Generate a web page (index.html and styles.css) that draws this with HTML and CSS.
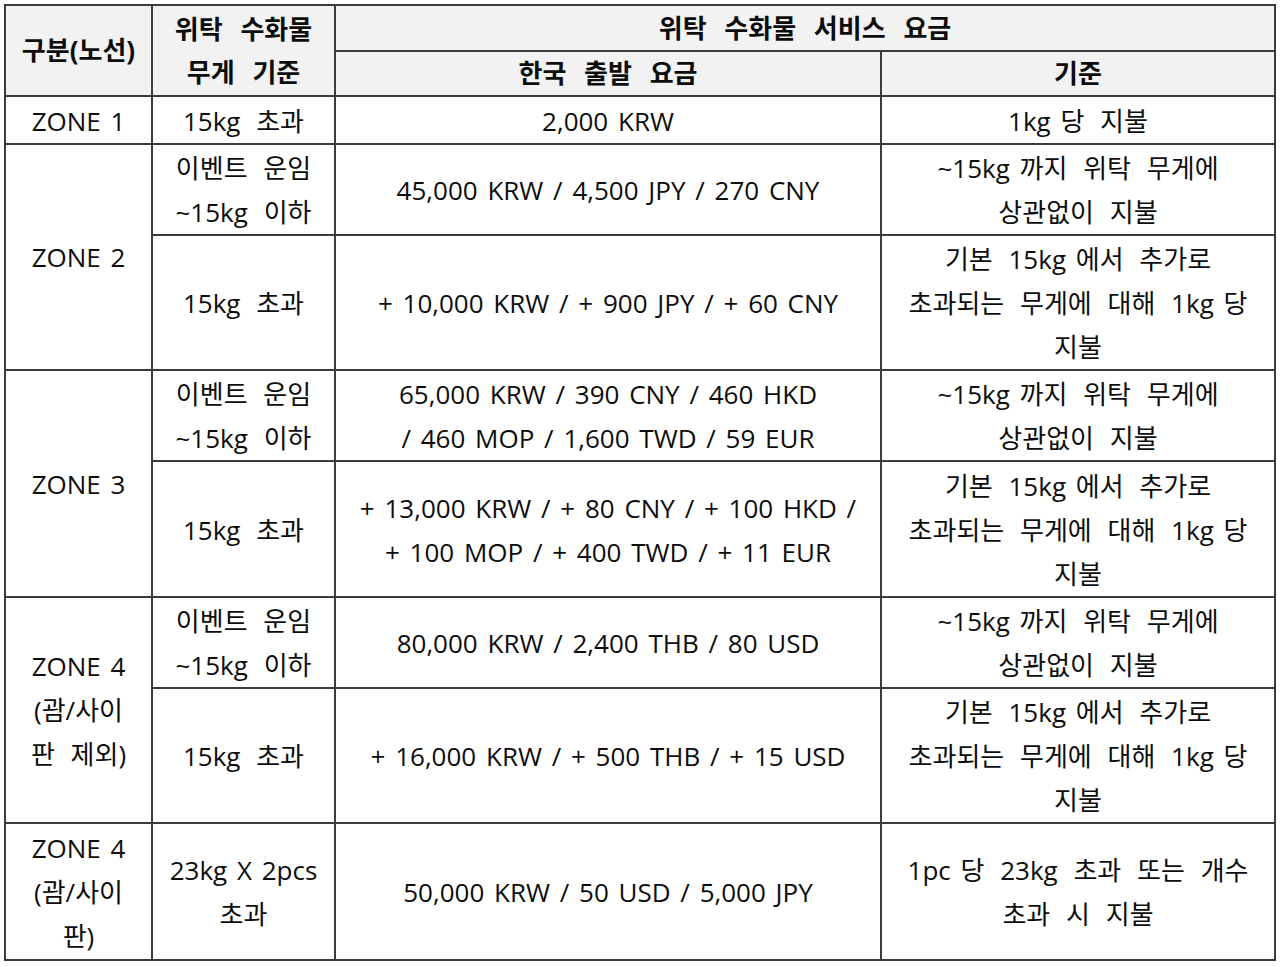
FILE: index.html
```html
<!DOCTYPE html>
<html lang="ko">
<head>
<meta charset="utf-8">
<title>위탁 수화물 서비스 요금</title>
<link rel="stylesheet" href="styles.css">
</head>
<body>
<table class="fee-table">
  <colgroup>
    <col class="c1"><col class="c2"><col class="c3"><col class="c4">
  </colgroup>
  <thead>
    <tr class="h1">
      <th rowspan="2">구분(노선)</th>
      <th rowspan="2">위탁 수화물<br>무게 기준</th>
      <th colspan="2">위탁 수화물 서비스 요금</th>
    </tr>
    <tr class="h2">
      <th>한국 출발 요금</th>
      <th>기준</th>
    </tr>
  </thead>
  <tbody>
    <tr class="roomy">
      <td>ZONE 1</td>
      <td class="ko">15kg 초과</td>
      <td>2,000 KRW</td>
      <td class="ko"><span class="n">1kg 당</span> 지불</td>
    </tr>
    <tr>
      <td rowspan="2">ZONE 2</td>
      <td class="ko">이벤트 운임<br>~15kg 이하</td>
      <td>45,000 KRW / 4,500 JPY / 270 CNY</td>
      <td class="ko"><span class="n">~15kg 까지</span> 위탁 무게에<br>상관없이 지불</td>
    </tr>
    <tr>
      <td class="ko">15kg 초과</td>
      <td>+ 10,000 KRW / + 900 JPY / + 60 CNY</td>
      <td class="ko">기본 <span class="n">15kg 에서</span> 추가로<br>초과되는 무게에 대해 <span class="n">1kg 당</span><br>지불</td>
    </tr>
    <tr>
      <td rowspan="2">ZONE 3</td>
      <td class="ko">이벤트 운임<br>~15kg 이하</td>
      <td>65,000 KRW / 390 CNY / 460 HKD<br>/ 460 MOP / 1,600 TWD / 59 EUR</td>
      <td class="ko"><span class="n">~15kg 까지</span> 위탁 무게에<br>상관없이 지불</td>
    </tr>
    <tr class="roomy">
      <td class="ko">15kg 초과</td>
      <td>+ 13,000 KRW / + 80 CNY / + 100 HKD /<br>+ 100 MOP / + 400 TWD / + 11 EUR</td>
      <td class="ko">기본 <span class="n">15kg 에서</span> 추가로<br>초과되는 무게에 대해 <span class="n">1kg 당</span><br>지불</td>
    </tr>
    <tr>
      <td rowspan="2">ZONE 4<br>(괌/사이<br><span class="ko-line">판 제외)</span></td>
      <td class="ko">이벤트 운임<br>~15kg 이하</td>
      <td>80,000 KRW / 2,400 THB / 80 USD</td>
      <td class="ko"><span class="n">~15kg 까지</span> 위탁 무게에<br>상관없이 지불</td>
    </tr>
    <tr>
      <td class="ko">15kg 초과</td>
      <td>+ 16,000 KRW / + 500 THB / + 15 USD</td>
      <td class="ko">기본 <span class="n">15kg 에서</span> 추가로<br>초과되는 무게에 대해 <span class="n">1kg 당</span><br>지불</td>
    </tr>
    <tr class="last">
      <td>ZONE 4<br>(괌/사이<br>판)</td>
      <td>23kg X 2pcs<br>초과</td>
      <td>50,000 KRW / 50 USD / 5,000 JPY</td>
      <td class="ko"><span class="n">1pc 당</span> 23kg 초과 또는 개수<br>초과 시 지불</td>
    </tr>
  </tbody>
</table>
</body>
</html>
```

FILE: styles.css
```css
html, body {
  margin: 0;
  padding: 0;
  background: #ffffff;
}

body {
  padding: 4px 0 0 4px;
  font-family: "Open Sans", "Noto Sans CJK KR", sans-serif;
  color: #0d0d0d;
}

.fee-table {
  border-collapse: collapse;
  table-layout: fixed;
  width: 1272px;
}

.c1 { width: 147px; }
.c2 { width: 183px; }
.c3 { width: 546px; }
.c4 { width: 394px; }

.fee-table th,
.fee-table td {
  border: 2px solid #3c3c3c;
  text-align: center;
  vertical-align: middle;
  padding: 0.5px 2px;
  font-size: 26px;
  line-height: 44px;
  white-space: nowrap;
}

.fee-table th {
  background: #f2f2f2;
  font-weight: 700;
  line-height: 43px;
  padding-top: 0.5px;
  padding-bottom: 0;
  word-spacing: 11px;
}

.fee-table td {
  font-weight: 400;
  word-spacing: 3px;
}

.fee-table td.ko,
.fee-table .ko-line {
  word-spacing: 9px;
}

.fee-table td .n {
  word-spacing: 3px;
}

.fee-table tr.roomy td {
  padding-top: 1.5px;
  padding-bottom: 0.5px;
}

.fee-table tr.last td {
  padding-top: 2px;
  padding-bottom: 1px;
}
```
